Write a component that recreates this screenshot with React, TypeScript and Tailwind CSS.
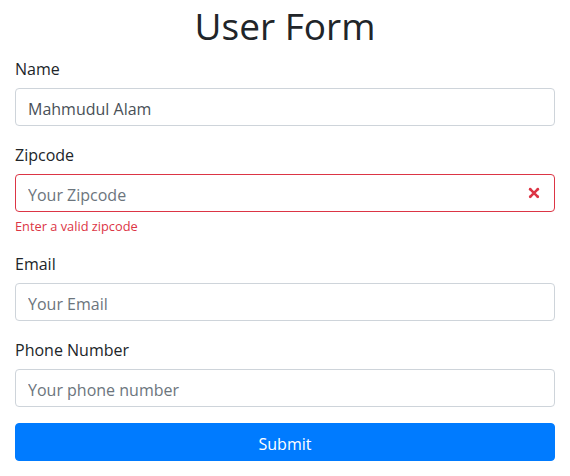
import React from "react";

const font = { fontFamily: '"Segoe UI", "Open Sans", "Noto Sans", sans-serif' };

function Field({
  label,
  placeholder,
  value,
  invalid,
  error,
}: {
  label: string;
  placeholder: string;
  value?: string;
  invalid?: boolean;
  error?: string;
}) {
  return (
    <div className="mb-4">
      <label className="mb-2 block h-6 pt-[2px] text-[16px] leading-[22px] text-[#212529]">{label}</label>
      <div className="relative">
        <input
          type="text"
          defaultValue={value}
          placeholder={placeholder}
          className={`block h-[38px] w-full rounded border bg-white px-3 pt-[3px] text-[16px] leading-6 text-[#495057] placeholder:text-[#6c757d] outline-none ${
            invalid ? "border-[#dc3545] pr-9" : "border-[#ced4da]"
          }`}
        />
        {invalid && (
          <svg
            className="absolute right-[12px] top-1/2 h-[18px] w-[18px] -translate-y-1/2"
            viewBox="-2 -2 7 7"
            fill="#dc3545"
          >
            <path stroke="#dc3545" d="M0 0l3 3m0-3L0 3" />
            <circle r=".5" />
            <circle cx="3" r=".5" />
            <circle cy="3" r=".5" />
            <circle cx="3" cy="3" r=".5" />
          </svg>
        )}
      </div>
      {error && <div className="mt-1 pt-[1px] text-[12.8px] leading-[18px] text-[#dc3545]">{error}</div>}
    </div>
  );
}

export default function App() {
  return (
    <div className="min-h-[476px] bg-white px-[15px]" style={font}>
      <h1 className="mb-2 h-12 pt-[3px] text-center text-[37px] font-normal leading-[45px] text-[#212529]">
        User Form
      </h1>
      <form onSubmit={(e) => e.preventDefault()}>
        <Field label="Name" placeholder="Your Name" value="Mahmudul Alam" />
        <Field label="Zipcode" placeholder="Your Zipcode" invalid error="Enter a valid zipcode" />
        <Field label="Email" placeholder="Your Email" />
        <Field label="Phone Number" placeholder="Your phone number" />
        <button
          type="submit"
          className="block h-[38px] w-full rounded border border-[#007bff] bg-[#007bff] pt-[3px] text-[16px] leading-6 text-white"
        >
          Submit
        </button>
      </form>
    </div>
  );
}
